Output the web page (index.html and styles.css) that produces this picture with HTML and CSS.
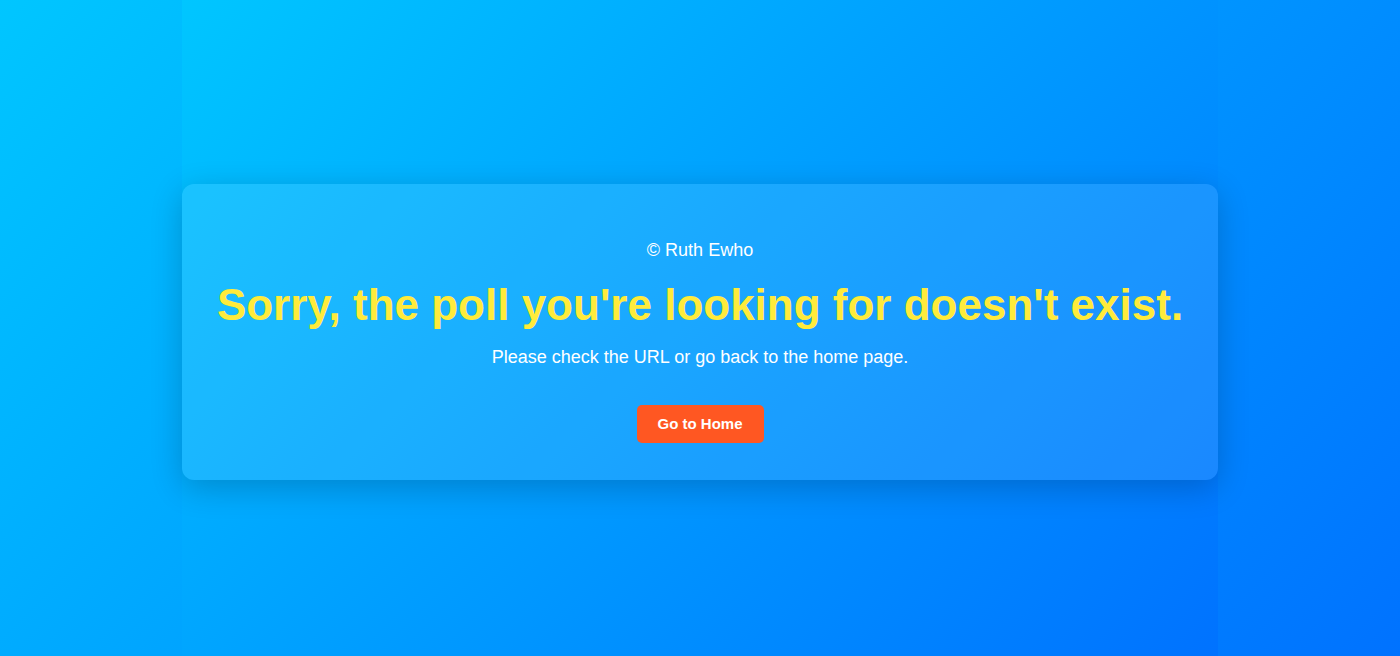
FILE: index.html
```html
<!DOCTYPE html>
<html>
<head>
  <title>Poll not found</title>
  <link rel="stylesheet" href="styles.css">
</head>
<body>
  <div class="page">
    <div class="card">
      <p class="credit">&copy; Ruth Ewho</p>
      <h1>Sorry, the poll you're looking for doesn't exist.</h1>
      <p class="hint">Please check the URL or go back to the home page.</p>
      <a href="/" class="btn-home">Go to Home</a>
    </div>
  </div>
</body>
</html>
```

FILE: styles.css
```css
html, body {
  height: 100%;
}
body {
  margin: 0;
  font-family: "Liberation Sans", Arial, sans-serif;
  background: linear-gradient(135deg, #00c6ff, #0072ff);
  color: white;
}
.page {
  width: 1036px;
  height: 100%;
  margin: 0 auto;
  display: flex;
  align-items: center;
  background: linear-gradient(135deg, #00c6ff, #0072ff);
}
.card {
  width: 100%;
  box-sizing: border-box;
  margin-top: 8px;
  padding: 56px 20px 37px;
  text-align: center;
  background: rgba(255,255,255,0.1);
  border-radius: 12px;
  box-shadow: 0 8px 32px rgba(0,0,0,0.2);
}
.credit {
  margin: 0;
  font-size: 18px;
  line-height: 21px;
}
h1 {
  margin: 18px 0 0;
  font-size: 44px;
  line-height: 51px;
  color: #ffeb3b;
}
.hint {
  margin: 17px 0 0;
  font-size: 18px;
  line-height: 21px;
}
.btn-home {
  display: inline-block;
  margin-top: 37px;
  padding: 10px 21px;
  background-color: #ff5722;
  color: white;
  font-size: 15px;
  line-height: 18px;
  font-weight: bold;
  text-decoration: none;
  border-radius: 5px;
}
```
